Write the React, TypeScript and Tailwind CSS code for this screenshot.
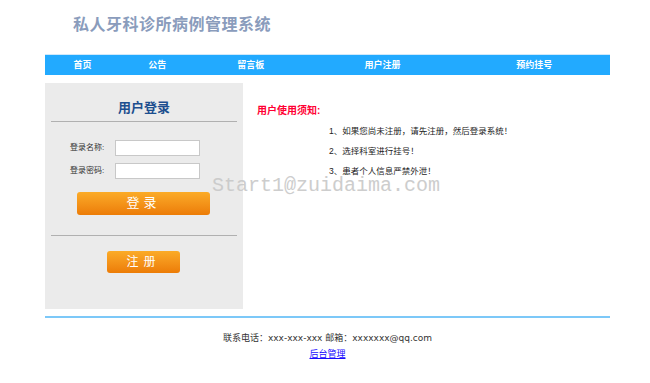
const NAV = [
  { label: "首页", w: "w-[75px]" },
  { label: "公告", w: "w-[75px]" },
  { label: "留言板", w: "w-[112px]" },
  { label: "用户注册", w: "w-[152px]" },
  { label: "预约挂号", w: "w-[152px]" },
];

const RULES = [
  "1、如果您尚未注册，请先注册，然后登录系统！",
  "2、选择科室进行挂号！",
  "3、患者个人信息严禁外泄！",
];

export default function App() {
  return (
    <div
      className="relative h-[383px] w-[650px] overflow-hidden bg-white"
      style={{ fontFamily: '"Liberation Sans", "Noto Sans CJK SC", sans-serif' }}
    >
      <div className="ml-[45px] w-[565px]">
        {/* header */}
        <div className="flex h-[54px] items-center pl-[28px] pb-[4px]">
          <h1 className="text-[16px] font-bold tracking-[0.5px] text-[#8a9cbc]">
            私人牙科诊所病例管理系统
          </h1>
        </div>

        {/* nav */}
        <div className="flex h-[21px] items-center border-t border-[#cfe9fb] bg-[#22aaff] pt-[2px]">
          {NAV.map((n) => (
            <div
              key={n.label}
              className={`${n.w} text-center text-[9px] font-bold text-white`}
            >
              {n.label}
            </div>
          ))}
        </div>

        {/* body */}
        <div className="mt-[8px] flex">
          <div className="flex h-[226px] w-[198px] flex-col bg-[#ebebeb] px-[6px]">
            <div className="pt-[15px] text-center text-[13px] font-bold text-[#1d4f8f]">
              用户登录
            </div>
            <div className="mt-[3px] h-px bg-[#b0b0b0]" />
            <div className="mt-[18px] flex flex-col gap-[7px] pl-[19px]">
              <div className="flex items-center">
                <span className="w-[45px] text-[8px] text-[#333]">登录名称:</span>
                <input className="h-[16px] w-[85px] border border-[#c8c8c8] bg-white" />
              </div>
              <div className="flex items-center">
                <span className="w-[45px] text-[8px] text-[#333]">登录密码:</span>
                <input className="h-[16px] w-[85px] border border-[#c8c8c8] bg-white" />
              </div>
            </div>
            <button className="mt-[13px] ml-[26px] h-[23px] w-[133px] rounded-[3px] bg-gradient-to-b from-[#fbab27] to-[#ec7c06] text-[13px] tracking-[4px] text-white">
              登录
            </button>
            <div className="mt-[20px] h-px bg-[#b0b0b0]" />
            <button className="mt-[15px] ml-[56px] h-[22px] w-[73px] rounded-[3px] bg-gradient-to-b from-[#fbab27] to-[#ec7c06] text-[12px] tracking-[5px] text-white">
              注册
            </button>
          </div>

          <div className="pl-[14px] pt-[20px]">
            <div className="text-[10px] font-bold text-[#ff0033]">用户使用须知:</div>
            <div className="mt-[8px] flex flex-col gap-[9px] pl-[72px]">
              {RULES.map((r) => (
                <div key={r} className="text-[8.5px] leading-[11px] text-[#222]">
                  {r}
                </div>
              ))}
            </div>
          </div>
        </div>

        {/* footer */}
        <div className="mt-[7px] h-[2px] bg-[#7cc8f8]" />
        <div
          className="mt-[14px] text-center text-[9px] leading-[12px] text-[#333]"
          style={{ fontFamily: '"DejaVu Sans", "Noto Sans CJK SC", sans-serif' }}
        >
          联系电话：xxx-xxx-xxx 邮箱：xxxxxxx@qq.com
        </div>
        <div className="mt-[2px] text-center leading-[12px]">
          <a href="#" className="text-[9px] text-[#1a0dff] underline">
            后台管理
          </a>
        </div>
      </div>

      {/* watermark */}
      <div
        className="pointer-events-none absolute left-[212px] top-[171px] text-[20px] text-[#c8c8c8] opacity-90"
        style={{ fontFamily: '"Liberation Mono", monospace' }}
      >
        Start1@zuidaima.com
      </div>
    </div>
  );
}
